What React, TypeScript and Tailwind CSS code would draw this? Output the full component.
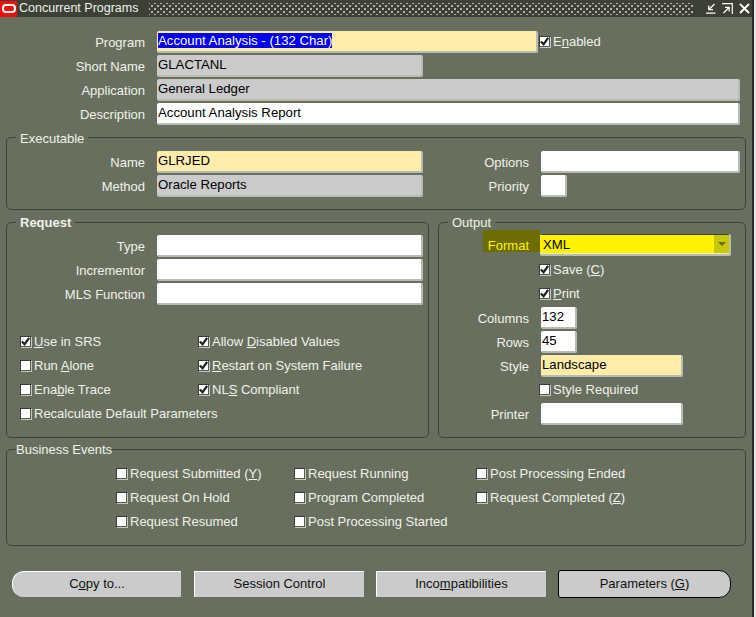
import React from "react";

const font = "font-['Liberation_Sans',Arial,sans-serif]";

function Field({ w, bg = "bg-white", children, className = "" }: { w: string; bg?: string; children?: React.ReactNode; className?: string }) {
  return (
    <div className={`${w} ${bg} ${className} h-[22px] shrink-0 rounded-[2px] border-r-2 border-b-2 border-[#b9bcb0] pl-px text-[13.2px] leading-[20px] text-black whitespace-nowrap overflow-hidden`}>
      {children}
    </div>
  );
}

function Check({ on, label }: { on?: boolean; label: React.ReactNode }) {
  return (
    <div className="flex h-6 items-center text-[13px] leading-[15px] text-[#f0f2ea] whitespace-nowrap">
      <span className="relative mr-[3px] h-[11px] w-[11px] shrink-0 border-t border-l border-[#3a3d33] bg-white shadow-[inset_-1px_-1px_0_#55584c,1px_1px_0_#c6c9bd]">
        {on && (
          <svg viewBox="0 0 12 12" className="absolute -left-px -top-px h-[11px] w-[11px]">
            <path d="M2 6l3 3 5-7" fill="none" stroke="#222" strokeWidth="2.4" />
          </svg>
        )}
      </span>
      <span>{label}</span>
    </div>
  );
}

function Row({ label, labelW, labelClass = "text-[#f0f2ea] pt-[4px]", children, className = "" }: { label: string; labelW: string; labelClass?: string; children: React.ReactNode; className?: string }) {
  return (
    <div className={`flex h-6 items-start gap-3 ${className}`}>
      <div className={`${labelW} ${labelClass} relative shrink-0 text-right text-[13px] leading-[15px]`}>{label}</div>
      {children}
    </div>
  );
}

function Group({ title, bold, tight, low, className = "", children }: { title: string; bold?: boolean; tight?: boolean; low?: boolean; className?: string; children: React.ReactNode }) {
  return (
    <div className={`relative shrink-0 rounded-[5px] border border-[#3f4337] ${className}`}>
      <div className={`absolute left-[9px] bg-[#696f5f] text-[13px] leading-[17px] text-[#f0f2ea] ${low ? "-top-[8px]" : "-top-[9px]"} ${tight ? "" : "px-[4px]"} ${bold ? "font-bold" : ""}`}>{title}</div>
      {children}
    </div>
  );
}

function Btn({ w, children, className = "" }: { w: string; children: React.ReactNode; className?: string }) {
  return (
    <div className={`${w} flex h-[26px] shrink-0 items-center justify-center rounded-[1px] border-t border-l border-white bg-[#cbcbcb] pb-px text-[13px] text-[#111] ${className}`}>
      {children}
    </div>
  );
}

export default function App() {
  return (
    <div className={`${font} flex h-[617px] w-[756px] overflow-hidden bg-[#696f5f]`}>
      <div className="flex w-[752px] shrink-0 flex-col">
        <div className="flex h-[17px] shrink-0 items-center bg-[#3c4036]">
          <div className="flex h-[16px] w-[17px] shrink-0 items-center justify-center bg-[#f20d0d]">
            <div className="h-[9px] w-[14px] rounded-[4px] border-2 border-white" />
          </div>
          <span className="ml-[2px] text-[12.5px] leading-[17px] text-[#f0f2ea]">Concurrent Programs</span>
          <div className="ml-[10px] h-[12px] flex-1 bg-[radial-gradient(#b4b7aa_0.7px,transparent_1px),radial-gradient(#b4b7aa_0.7px,transparent_1px)] bg-[length:6px_6px] bg-[position:0_0,3px_3px]" />
          <div className="ml-[12px] flex items-center gap-[6px] pr-[2px] text-white">
            <svg viewBox="0 0 10 11" className="h-[11px] w-[10px]"><path d="M0 10.2h9.5M8.5 1L3 6.5M2.8 2.5v4.2h4.2" fill="none" stroke="white" strokeWidth="1.3" /></svg>
            <svg viewBox="0 0 11 11" className="h-[11px] w-[11px]"><path d="M0 .7h10.3V11M1.5 10L7 4.5M3 4.3h4.2v4.2" fill="none" stroke="white" strokeWidth="1.2" /></svg>
            <svg viewBox="0 0 11 11" className="h-[11px] w-[11px]"><path d="M1 1l9 9M10 1l-9 9" fill="none" stroke="white" strokeWidth="1.8" /></svg>
          </div>
        </div>

        <div className="shrink-0 pt-[14px] pl-[15px]">
          <Row label="Program" labelW="w-[130px]">
            <Field w="w-[381px]" bg="bg-[#feecaa]"><span className="bg-[#0000f0] text-white">Account Analysis - (132 Char)</span></Field>
            <div className="-mt-[2px] -ml-[11px]"><Check on label={<>E<u>n</u>abled</>} /></div>
          </Row>
          <Row label="Short Name" labelW="w-[130px]"><Field w="w-[266px]" bg="bg-[#cbcbcb]">GLACTANL</Field></Row>
          <Row label="Application" labelW="w-[130px]"><Field w="w-[583px]" bg="bg-[#cbcbcb]">General Ledger</Field></Row>
          <Row label="Description" labelW="w-[130px]"><Field w="w-[583px]">Account Analysis Report</Field></Row>
        </div>

        <Group title="Executable" low className="mx-[6px] mt-[10px] h-[73px] pt-[13px] pl-[8px]">
          <div className="flex">
            <div>
              <Row label="Name" labelW="w-[130px]"><Field w="w-[266px]" bg="bg-[#feecaa]">GLRJED</Field></Row>
              <Row label="Method" labelW="w-[130px]"><Field w="w-[266px]" bg="bg-[#cbcbcb]">Oracle Reports</Field></Row>
            </div>
            <div className="ml-[12px]">
              <Row label="Options" labelW="w-[94px]"><Field w="w-[199px]" /></Row>
              <Row label="Priority" labelW="w-[94px]"><Field w="w-[26px]" /></Row>
            </div>
          </div>
        </Group>

        <div className="mx-[6px] mt-[12px] flex shrink-0 gap-[9px]">
          <Group title="Request" bold className="h-[216px] w-[423px] pt-[12px] pl-[8px]">
            <Row label="Type" labelW="w-[130px]"><Field w="w-[266px]" /></Row>
            <Row label="Incrementor" labelW="w-[130px]"><Field w="w-[266px]" /></Row>
            <Row label="MLS Function" labelW="w-[130px]"><Field w="w-[266px]" /></Row>
            <div className="mt-[22px] grid grid-cols-[178px_1fr] pl-[5px]">
              <Check on label={<><u>U</u>se in SRS</>} />
              <Check on label={<>Allow <u>D</u>isabled Values</>} />
              <Check label={<>Run <u>A</u>lone</>} />
              <Check on label={<><u>R</u>estart on System Failure</>} />
              <Check label={<>Ena<u>b</u>le Trace</>} />
              <Check on label={<>NL<u>S</u> Compliant</>} />
              <Check label="Recalculate Default Parameters" />
            </div>
          </Group>
          <Group title="Output" className="h-[216px] w-[308px] pt-[12px]">
            <div className="absolute left-[44px] top-[7px] h-[22px] w-[57px] bg-[#6d6d00]" />
            <Row label="Format" labelW="w-[90px]" labelClass="text-[#fff200] pt-[3px]" className="relative">
              <Field w="w-[191px]" bg="bg-[#feecaa]" className="relative -mt-px -ml-px shadow-[inset_0_1px_0_#3f4337]">
                <div className="absolute inset-x-0 top-px h-[18px] bg-[#fff200]" />
                <span className="relative top-px pl-[2px]">XML</span>
                <span className="absolute right-0 top-px flex h-[18px] w-[15px] items-center justify-center bg-[#c8c80a]">
                  <span className="h-0 w-0 border-x-[4px] border-t-[4px] border-x-transparent border-t-[#6b6b20]" />
                </span>
              </Field>
            </Row>
            <div className="-mt-[2px] mb-[2px] pl-[100px]"><Check on label={<>Save (<u>C</u>)</>} /></div>
            <div className="-mt-[2px] mb-[2px] pl-[100px]"><Check on label={<><u>P</u>rint</>} /></div>
            <Row label="Columns" labelW="w-[90px]"><Field w="w-[36px]">132</Field></Row>
            <Row label="Rows" labelW="w-[90px]"><Field w="w-[36px]">45</Field></Row>
            <Row label="Style" labelW="w-[90px]"><Field w="w-[142px]" bg="bg-[#feecaa]">Landscape</Field></Row>
            <div className="-mt-[2px] mb-[2px] pl-[100px]"><Check label="Style Required" /></div>
            <Row label="Printer" labelW="w-[90px]"><Field w="w-[142px]" /></Row>
          </Group>
        </div>

        <Group title="Business Events" tight className="mx-[6px] mt-[11px] h-[97px] pt-[11px] pl-[109px]">
          <div className="grid grid-cols-[178px_182px_1fr]">
            <Check label={<>Request Submitted (<u>Y</u>)</>} />
            <Check label="Request Running" />
            <Check label="Post Processing Ended" />
            <Check label="Request On Hold" />
            <Check label="Program Completed" />
            <Check label={<>Request Completed (<u>Z</u>)</>} />
            <Check label="Request Resumed" />
            <Check label="Post Processing Started" />
          </div>
        </Group>

        <div className="mt-[24px] flex items-center pl-[12px]">
          <Btn w="w-[169px]" className="rounded-l-[12px]">C<u>o</u>py to...</Btn>
          <Btn w="w-[170px]" className="ml-[13px]">Session Control</Btn>
          <Btn w="w-[170px]" className="ml-[12px]">Inco<u>m</u>patibilities</Btn>
          <Btn w="w-[173px]" className="ml-[12px] !h-[28px] rounded-r-[12px] rounded-l-[3px] !border !border-black">Parameters (<u>G</u>)</Btn>
        </div>
      </div>
      <div className="w-[2px] shrink-0 bg-[#2a2c26]" />
      <div className="w-[2px] shrink-0 bg-[#e8e8e8]" />
    </div>
  );
}
